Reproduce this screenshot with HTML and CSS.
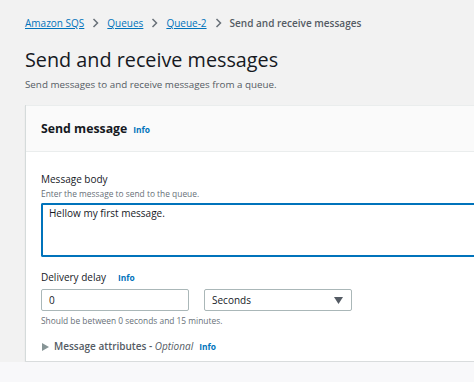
FILE: index.html
```html
<!DOCTYPE html>
<html lang="en">
<head>
  <meta charset="UTF-8">
  <title>Send and receive messages</title>
  <link rel="stylesheet" href="styles.css">
</head>
<body>
  <div class="page">
    <!-- breadcrumb -->
    <nav class="crumbs">
      <a href="#">Amazon SQS</a>
      <svg class="sep" width="7" height="10" viewBox="0 0 7 10"><path d="M1.5 1l4 4-4 4" fill="none" stroke="#687078" stroke-width="1.5"/></svg>
      <a href="#">Queues</a>
      <svg class="sep" width="7" height="10" viewBox="0 0 7 10"><path d="M1.5 1l4 4-4 4" fill="none" stroke="#687078" stroke-width="1.5"/></svg>
      <a href="#">Queue-2</a>
      <svg class="sep" width="7" height="10" viewBox="0 0 7 10"><path d="M1.5 1l4 4-4 4" fill="none" stroke="#687078" stroke-width="1.5"/></svg>
      <span class="here">Send and receive messages</span>
    </nav>

    <h1 class="title">Send and receive messages</h1>
    <p class="sub">Send messages to and receive messages from a queue.</p>

    <!-- send message card -->
    <section class="card">
      <div class="card-head">
        <h2>Send message</h2>
        <a href="#" class="info">Info</a>
      </div>
      <div class="card-body">
        <div class="field">
          <label class="lbl">Message body</label>
          <div class="hint">Enter the message to send to the queue.</div>
          <div class="area">Hellow my first message.</div>
        </div>

        <div class="field">
          <div class="lbl-row">
            <label class="lbl">Delivery delay</label>
            <a href="#" class="info">Info</a>
          </div>
          <div class="row">
            <div class="box num">0</div>
            <div class="box sel">Seconds
              <svg class="tri" width="9" height="7" viewBox="0 0 9 7"><path d="M0 0h9L4.5 7z" fill="#545b64"/></svg>
            </div>
          </div>
          <div class="hint below">Should be between 0 seconds and 15 minutes.</div>
        </div>

        <div class="expand">
          <svg class="caret" width="7" height="8" viewBox="0 0 7 8"><path d="M0 0l7 4-7 4z" fill="#879596"/></svg>
          <span class="ex-txt">Message attributes - <i>Optional</i></span>
          <a href="#" class="info">Info</a>
        </div>
      </div>
    </section>
  </div>
</body>
</html>
```

FILE: styles.css
```css
html, body{
  margin: 0;
  padding: 0;
}

body{
  background-color: #f8f8fa;
  font-family: "Open Sans", "Noto Sans", sans-serif;
  color: #16191f;
  overflow: hidden;
}

.page{
  background-color: #f2f2f2;
  padding: 15px 0 0 25px;
  height: 347px;
}

/* breadcrumb */
.crumbs{
  font-size: 10px;
  line-height: 16px;
  display: flex;
  align-items: center;
  white-space: nowrap;
}
.crumbs a{
  color: #0073bb;
  text-decoration: underline;
}
.crumbs .sep{
  margin: 0 8px 0 8px;
}
.crumbs .here{
  color: #545b64;
  font-weight: 600;
}

.title{
  margin: 15px 0 0;
  font-size: 19.8px;
  font-weight: 400;
  line-height: 28px;
  color: #16191f;
}
.sub{
  margin: 4px 0 0;
  font-size: 9.8px;
  line-height: 14px;
  color: #545b64;
}

/* card */
.card{
  margin-top: 13px;
  background-color: #fff;
  border-left: 1px solid #d5dbdb;
  box-shadow: 0 1px 1px rgba(0,27,43,.1);
}
.card-head{
  background-color: #fafafa;
  border-top: 1px solid #eaeded;
  border-bottom: 1px solid #eaeded;
  height: 45px;
  padding-left: 15px;
  display: flex;
  align-items: center;
  gap: 6px;
}
.card-head h2{
  margin: 0;
  font-size: 12.3px;
  font-weight: 700;
}
.info{
  color: #0073bb;
  font-size: 8.4px;
  font-weight: 700;
  text-decoration: none;
  margin-top: 2px;
}

.card-body{
  padding: 19px 0 6px 15px;
}
.lbl{
  display: block;
  font-size: 10px;
  line-height: 17px;
  color: #16191f;
}
.hint{
  font-size: 8.4px;
  line-height: 12px;
  color: #687078;
}
.area{
  box-sizing: border-box;
  margin-top: 3px;
  height: 54px;
  border: 2px solid #0073bb;
  border-right: none;
  border-radius: 2px 0 0 2px;
  padding: 1px 6px;
  font-size: 10px;
  line-height: 15px;
}

.field + .field{
  margin-top: 12px;
}
.lbl-row{
  display: flex;
  align-items: center;
  gap: 12px;
}
.lbl-row .info{
  margin-top: 0;
}
.row{
  display: flex;
  gap: 15px;
  margin-top: 3px;
}
.box{
  box-sizing: border-box;
  width: 148px;
  height: 22px;
  border: 1px solid #aab7b8;
  border-radius: 2px;
  padding: 0 7px;
  font-size: 10px;
  line-height: 20px;
}
.sel{
  display: flex;
  justify-content: space-between;
  align-items: center;
}
.tri{
  margin-right: 1px;
}
.hint.below{
  margin-top: 4px;
}

/* expandable */
.expand{
  margin-top: 11px;
  display: flex;
  align-items: center;
  gap: 5px;
  line-height: 17px;
}
.caret{
  margin-left: 1px;
}
.ex-txt{
  font-size: 10px;
  font-weight: 600;
  color: #545b64;
}
.ex-txt i{
  font-weight: 400;
}
.expand .info{
  margin-left: 1px;
  margin-top: 0;
}
```
